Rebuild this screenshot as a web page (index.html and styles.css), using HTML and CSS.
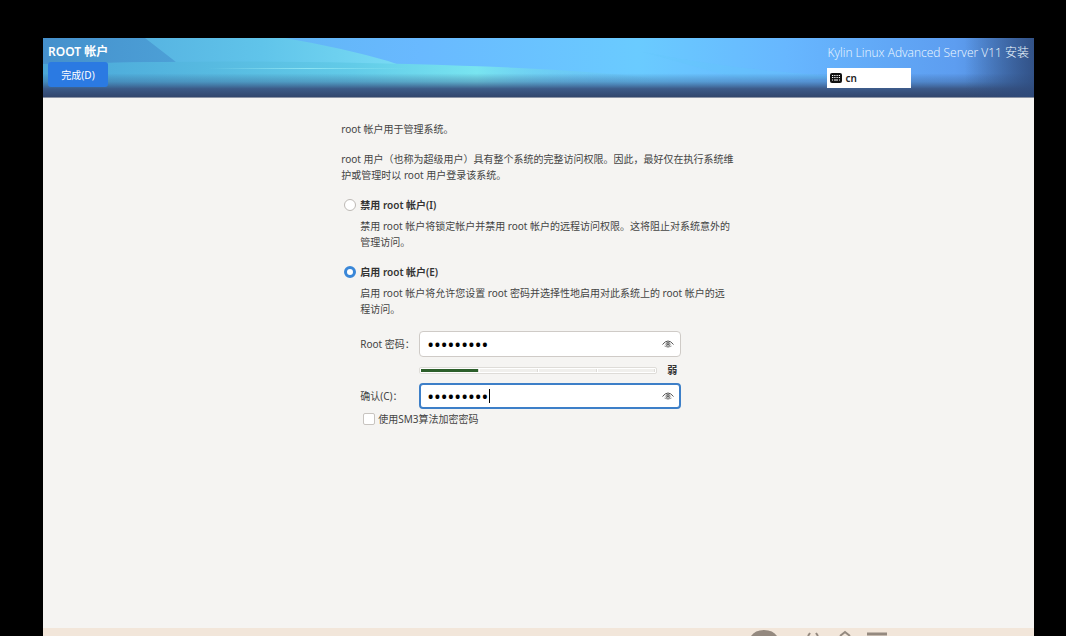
FILE: index.html
```html
<!DOCTYPE html>
<html lang="zh-CN">
	<head>
		<meta charset="UTF-8">
		<title>ROOT 帐户</title>
		<link rel="stylesheet" href="styles.css">
	</head>
	<body>
		<div class="screen">
			<header class="header">
				<svg class="header-bg" viewBox="0 0 991 59" preserveAspectRatio="none" aria-hidden="true">
					<defs>
						<linearGradient id="sky">
							<stop offset="0" stop-color="#4590cc"/>
							<stop offset="0.13" stop-color="#4c9fd6"/>
							<stop offset="0.25" stop-color="#62b6f6"/>
							<stop offset="0.38" stop-color="#69b9ff"/>
							<stop offset="0.6" stop-color="#6acbff"/>
							<stop offset="0.75" stop-color="#67b7ff"/>
							<stop offset="0.92" stop-color="#5d9df0"/>
							<stop offset="1" stop-color="#4a80c8"/>
						</linearGradient>
						<linearGradient id="glow">
							<stop offset="0" stop-color="#4aa6d8"/>
							<stop offset="0.5" stop-color="#62cbe8"/>
							<stop offset="0.7" stop-color="#78e4f0"/>
							<stop offset="1" stop-color="#62b8e8" stop-opacity="0"/>
						</linearGradient>
						<linearGradient id="ray">
							<stop offset="0" stop-color="#4fa6da"/>
							<stop offset="0.6" stop-color="#60c4ea"/>
							<stop offset="1" stop-color="#7adcf4"/>
						</linearGradient>
						<linearGradient id="streak">
							<stop offset="0" stop-color="#a0f0f8" stop-opacity="0"/>
							<stop offset="0.5" stop-color="#a0f0f8" stop-opacity="0.7"/>
							<stop offset="1" stop-color="#a0f0f8" stop-opacity="0"/>
						</linearGradient>
						<linearGradient id="ground" x2="0" y2="1">
							<stop offset="0.6" stop-color="#34507f" stop-opacity="0"/>
							<stop offset="0.74" stop-color="#3a5f90" stop-opacity="0.4"/>
							<stop offset="0.86" stop-color="#3a5582" stop-opacity="0.95"/>
							<stop offset="1" stop-color="#32466d"/>
						</linearGradient>
						<linearGradient id="edge">
							<stop offset="0.93" stop-color="#2e4a7c" stop-opacity="0"/>
							<stop offset="1" stop-color="#2e4a7c" stop-opacity="0.85"/>
						</linearGradient>
					</defs>
					<rect width="991" height="59" fill="url(#sky)"/>
					<path d="M102 0H242Q300 10 345 23L365 30H0V26L133 24Z" fill="url(#ray)"/>
					<path d="M0 26Q180 21 365 26T620 42L400 59H0Z" fill="url(#glow)"/>
					<rect x="165" y="30" width="200" height="1" fill="url(#streak)"/>
					<path d="M600 14Q720 38 860 40L700 42Z" fill="#62c8fa" opacity="0.3"/>
					<rect width="991" height="59" fill="url(#ground)"/>
					<rect width="991" height="59" fill="url(#edge)"/>
				</svg>
				<div class="header-left">
					<h1 class="title">ROOT 帐户</h1>
					<button class="done" type="button">完成(D)</button>
				</div>
				<div class="header-right">
					<div class="product">Kylin Linux Advanced Server V11 安装</div>
					<button class="layout" type="button">
						<svg width="12" height="10" viewBox="0 0 12 10" aria-hidden="true">
							<rect width="12" height="10" rx="2" fill="#111"/>
							<path d="M2 2.5H10M2 4.5H10" stroke="#fff" stroke-dasharray="1 0.75"/>
							<path d="M2 7H3M4 7H8M9 7H10" stroke="#fff"/>
						</svg>
						cn
					</button>
				</div>
			</header>

			<main class="content">
				<form class="form">
					<p class="intro">root 帐户用于管理系统。</p>
					<p class="intro">root 用户（也称为超级用户）具有整个系统的完整访问权限。因此，最好仅在执行系统维护或管理时以 root 用户登录该系统。</p>

					<div class="option">
						<input type="radio" name="root" id="disable">
						<label for="disable">禁用 root 帐户(I)</label>
						<p>禁用 root 帐户将锁定帐户并禁用 root 帐户的远程访问权限。这将阻止对系统意外的管理访问。</p>
					</div>

					<div class="option">
						<input type="radio" name="root" id="enable" checked>
						<label for="enable">启用 root 帐户(E)</label>
						<p>启用 root 帐户将允许您设置 root 密码并选择性地启用对此系统上的 root 帐户的远程访问。</p>
					</div>

					<div class="fields">
						<label for="password">Root 密码：</label>
						<div class="field">
							<input type="password" id="password" value="kylin1234">
							<button class="eye" type="button" aria-label="显示密码">
								<svg width="12" height="8" viewBox="0 0 12 8" fill="none" stroke="#555" aria-hidden="true">
									<path d="M0.5 4.5Q6 -2.5 11.5 4.5"/>
									<path d="M2.5 6Q6 8.5 9.5 6" stroke-width="0.6"/>
									<circle cx="6" cy="4.3" r="2" stroke-width="0.8"/>
									<circle cx="6" cy="4.3" r="0.7" fill="#444"/>
								</svg>
							</button>
						</div>
						<div class="strength">
							<div class="bar"><i class="on"></i><i></i><i></i><i></i></div>
							<b>弱</b>
						</div>
						<label for="confirm">确认(C)：</label>
						<div class="field focus">
							<input type="password" id="confirm" value="kylin1234">
							<span class="caret"></span>
							<button class="eye" type="button" aria-label="显示密码">
								<svg width="12" height="8" viewBox="0 0 12 8" fill="none" stroke="#555" aria-hidden="true">
									<path d="M0.5 4.5Q6 -2.5 11.5 4.5"/>
									<path d="M2.5 6Q6 8.5 9.5 6" stroke-width="0.6"/>
									<circle cx="6" cy="4.3" r="2" stroke-width="0.8"/>
									<circle cx="6" cy="4.3" r="0.7" fill="#444"/>
								</svg>
							</button>
						</div>
					</div>

					<div class="sm3">
						<input type="checkbox" id="sm3">
						<label for="sm3">使用SM3算法加密密码</label>
					</div>
				</form>
			</main>

			<footer class="footer">
				<svg width="180" height="8" viewBox="0 0 180 8" fill="none" stroke="#94897f" stroke-width="2" aria-hidden="true">
					<path d="M1 8Q5 2 14 2T27 8Z" fill="#94897f" stroke="none"/>
					<path d="M60 5L58 8M66 5L68 8M90 8L95 4L100 8"/>
					<path d="M117 6H137" stroke-width="3"/>
				</svg>
			</footer>
		</div>
	</body>
</html>
```

FILE: styles.css
```css
*{
	margin: 0;
	padding: 0;
	box-sizing: border-box;
}
body{
	min-height: 100vh;
	padding: 38px 32px 0 43px;
	display: flex;
	background: #000;
	color: #444;
	font: 10px/16px "Noto Sans", "Noto Sans CJK SC", sans-serif;
}
button, input{
	font: inherit;
	color: inherit;
	border: none;
}
.screen{
	flex: 1;
	display: flex;
	flex-direction: column;
	background: #f5f4f2;
}

/* header */
.header{
	position: relative;
	display: flex;
	justify-content: space-between;
	padding: 4px 5px 9px;
	border-bottom: 1px solid #8b93a5;
	color: #fff;
}
.header-bg{
	position: absolute;
	left: 0;
	top: 0;
	width: 100%;
	height: 100%;
}
.header-left, .header-right{
	position: relative;
	display: flex;
	flex-direction: column;
	align-items: flex-start;
}
.title{
	font-size: 12px;
	font-weight: 600;
	line-height: 20px;
}
.done{
	width: 60px;
	height: 25px;
	border-radius: 3px;
	background: #2b7ae2;
}
.product{
	font-family: "Open Sans", "Noto Sans CJK SC", sans-serif;
	font-size: 12px;
	font-weight: 300;
	line-height: 22px;
	color: #f0faff;
}
.layout{
	display: flex;
	align-items: center;
	gap: 3px;
	width: 84px;
	height: 20px;
	margin-top: 4px;
	padding: 0 3px;
	background: #fff;
	color: #222;
	font-weight: 600;
}

/* form */
.content{
	flex: 1;
	padding-top: 23px;
}
.form{
	width: 40%;
	margin: 0 auto;
	padding-left: 1px;
}
.intro{
	margin-bottom: 14px;
}
.option{
	display: grid;
	grid-template-columns: 12px 1fr;
	column-gap: 7px;
	align-items: center;
	margin-bottom: 14px;
	padding-right: 4px;
}
.option input{
	appearance: none;
	width: 12px;
	height: 12px;
	margin-left: 3px;
	border: 1px solid #bdb9b5;
	border-radius: 50%;
	background: #fff;
}
.option input:checked{
	border: 3px solid #3a87d8;
}
.option label{
	font-weight: 600;
	color: #333;
}
.option p{
	grid-column: 2;
	margin-top: 5px;
}
.fields{
	display: grid;
	grid-template-columns: 59px 262px;
	align-items: center;
	margin-left: 19px;
}
.field{
	position: relative;
	height: 26px;
}
.field input{
	width: 100%;
	height: 100%;
	padding: 0 24px 0 7px;
	border: 1px solid #cfcbc7;
	border-radius: 4px;
	background: #fff;
	color: #000;
	font-size: 18px;
}
.focus input{
	padding-left: 6px;
	border: 2px solid #3d7fc8;
}
.caret{
	position: absolute;
	left: 70px;
	top: 6px;
	width: 1px;
	height: 14px;
	background: #000;
}
.eye{
	position: absolute;
	right: 7px;
	top: 9px;
	display: flex;
	background: none;
}
.strength{
	grid-column: 2;
	display: flex;
	align-items: center;
	justify-content: space-between;
	height: 26px;
	padding-right: 4px;
	color: #333;
}
.bar{
	display: flex;
	gap: 1px;
	width: 238px;
	padding: 1px;
	border: 1px solid #dedcd8;
	border-radius: 2px;
	background: #fff;
}
.bar i{
	flex: 1;
	height: 3px;
	background: #f0efec;
	border-right: 1px solid #dedcd8;
}
.bar .on{
	background: #2d5f2b;
}
.sm3{
	display: flex;
	align-items: center;
	gap: 3px;
	margin: 2px 0 0 22px;
}
.sm3 input{
	appearance: none;
	width: 12px;
	height: 12px;
	border: 1px solid #c8c4c0;
	border-radius: 2px;
	background: #fff;
}

.footer{
	display: flex;
	justify-content: flex-end;
	padding-right: 104px;
	background: #f2e6da;
}
```
